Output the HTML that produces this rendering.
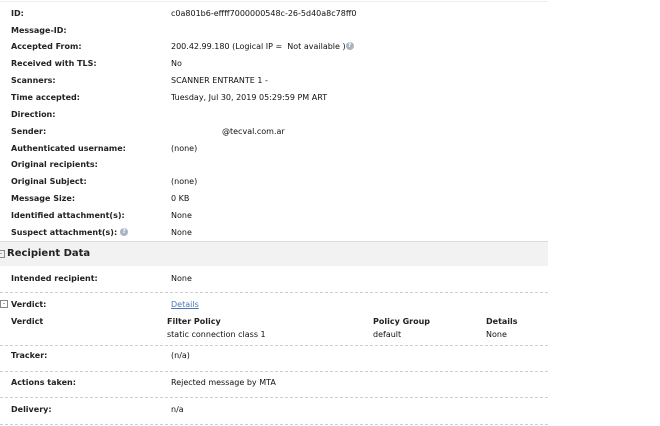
<!DOCTYPE html>
<html><head><style>
body{margin:0;width:660px;height:426px;background:#fff;font-family:"DejaVu Sans","Liberation Sans",sans-serif;font-size:8px;color:#111;position:relative;overflow:hidden}
.a{position:absolute;white-space:nowrap;line-height:10px;margin-top:1px}
.b{font-weight:bold;color:#222}
.d{position:absolute;left:0;width:548px;border-top:1px dashed #cfcfcf;height:0}
.q{display:inline-block;width:8px;height:8px;border-radius:50%;background:#aab4c4;color:#fff;font-size:6px;line-height:8px;text-align:center;vertical-align:top;font-weight:bold}
.m{position:absolute;width:6px;height:6px;border:1px solid #888;font-size:6px;line-height:6px;text-align:center;color:#333}
</style></head><body>
<div style="position:absolute;left:0;top:1px;width:548px;height:1px;background:#eee"></div>
<div class="a b" style="left:11px;top:8px">ID:</div><div class="a" style="left:171px;top:8px">c0a801b6-effff7000000548c-26-5d40a8c78ff0</div>
<div class="a b" style="left:11px;top:25px">Message-ID:</div>
<div class="a b" style="left:11px;top:41px">Accepted From:</div><div class="a" style="left:171px;top:41px">200.42.99.180 (Logical IP = &nbsp;Not available )<span class="q">?</span></div>
<div class="a b" style="left:11px;top:58px">Received with TLS:</div><div class="a" style="left:171px;top:58px">No</div>
<div class="a b" style="left:11px;top:75px">Scanners:</div><div class="a" style="left:171px;top:75px">SCANNER ENTRANTE 1 -</div>
<div class="a b" style="left:11px;top:92px">Time accepted:</div><div class="a" style="left:171px;top:92px">Tuesday, Jul 30, 2019 05:29:59 PM ART</div>
<div class="a b" style="left:11px;top:109px">Direction:</div>
<div class="a b" style="left:11px;top:126px">Sender:</div><div class="a" style="left:222px;top:126px">@tecval.com.ar</div>
<div class="a b" style="left:11px;top:143px">Authenticated username:</div><div class="a" style="left:171px;top:143px">(none)</div>
<div class="a b" style="left:11px;top:159px">Original recipients:</div>
<div class="a b" style="left:11px;top:176px">Original Subject:</div><div class="a" style="left:171px;top:176px">(none)</div>
<div class="a b" style="left:11px;top:193px">Message Size:</div><div class="a" style="left:171px;top:193px">0 KB</div>
<div class="a b" style="left:11px;top:210px">Identified attachment(s):</div><div class="a" style="left:171px;top:210px">None</div>
<div class="a b" style="left:11px;top:227px">Suspect attachment(s): <span class="q">?</span></div><div class="a" style="left:171px;top:227px">None</div>
<div style="position:absolute;left:0;top:241px;width:548px;height:1px;background:#ddd"></div>
<div style="position:absolute;left:0;top:242px;width:548px;height:24px;background:#f2f2f2"></div>
<div class="m" style="left:-3px;top:250px">-</div>
<div class="a b" style="left:7px;top:247px;font-size:10px;line-height:12px">Recipient Data</div>
<div class="a b" style="left:11px;top:273px">Intended recipient:</div><div class="a" style="left:171px;top:273px">None</div>
<div class="d" style="top:292px"></div>
<div class="m" style="left:0px;top:300px">-</div>
<div class="a b" style="left:11px;top:299px">Verdict:</div><div class="a" style="left:171px;top:299px;color:#4a78b8;text-decoration:underline">Details</div>
<div class="a b" style="left:11px;top:316px">Verdict</div>
<div class="a b" style="left:167px;top:316px">Filter Policy</div>
<div class="a b" style="left:373px;top:316px">Policy Group</div>
<div class="a b" style="left:486px;top:316px">Details</div>
<div class="a" style="left:167px;top:329px">static connection class 1</div>
<div class="a" style="left:373px;top:329px">default</div>
<div class="a" style="left:486px;top:329px">None</div>
<div class="d" style="top:345px"></div>
<div class="a b" style="left:11px;top:350px">Tracker:</div><div class="a" style="left:171px;top:350px">(n/a)</div>
<div class="d" style="top:371px"></div>
<div class="a b" style="left:11px;top:377px">Actions taken:</div><div class="a" style="left:171px;top:377px">Rejected message by MTA</div>
<div class="d" style="top:397px"></div>
<div class="a b" style="left:11px;top:404px">Delivery:</div><div class="a" style="left:171px;top:404px">n/a</div>
<div class="d" style="top:424px"></div>
</body></html>
